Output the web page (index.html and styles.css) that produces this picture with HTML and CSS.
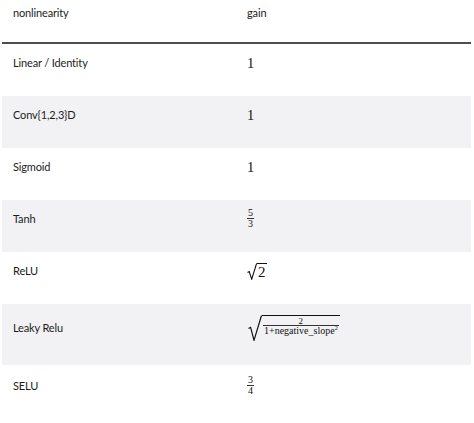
FILE: index.html
```html
<!DOCTYPE html>
<html>
<head>
<meta charset="utf-8">
<link rel="stylesheet" href="styles.css">
</head>
<body>
<table class="tbl">
  <thead>
    <tr><th class="c1"><div class="hd">nonlinearity</div></th><th><div class="hd">gain</div></th></tr>
  </thead>
  <tbody>
    <tr><td><div class="txt">Linear / Identity</div></td><td><div class="m-one">1</div></td></tr>
    <tr class="alt"><td><div class="txt">Conv{1,2,3}D</div></td><td><div class="m-one">1</div></td></tr>
    <tr><td><div class="txt">Sigmoid</div></td><td><div class="m-one">1</div></td></tr>
    <tr class="alt"><td><div class="txt">Tanh</div></td><td><div class="frac f-tanh"><span class="num">5</span><span class="den">3</span></div></td></tr>
    <tr><td><div class="txt">ReLU</div></td><td><div class="sqrt s-small"><svg class="rad" width="10" height="17" viewBox="0 0 10 17"><path d="M0.5 9.5 L2.2 8.6 L4.7 16.2 L9.6 0.5" fill="none" stroke="#111" stroke-width="1.1"/></svg><span class="rbody">2</span></div></td></tr>
    <tr class="alt tall"><td><div class="txt t-tall">Leaky Relu</div></td><td><div class="sqrt s-big"><svg class="rad" width="14" height="26" viewBox="0 0 14 26"><path d="M0.5 13.5 L2.6 12.3 L6 25.3 L13.5 0.5" fill="none" stroke="#111" stroke-width="1.2"/></svg><span class="rbody"><span class="frac f-wide"><span class="num">2</span><span class="den">1+negative_slope<sup>2</sup></span></span></span></div></td></tr>
    <tr class="last"><td><div class="txt t-last">SELU</div></td><td><div class="frac f-selu"><span class="num">3</span><span class="den">4</span></div></td></tr>
  </tbody>
</table>
</body>
</html>
```
FILE: styles.css
```css
html, body {
  margin: 0;
  padding: 0;
  background: #ffffff;
}
body {
  font-family: Lato, "Open Sans", sans-serif;
  font-size: 11px;
  letter-spacing: -0.15px;
  color: #1c1c1c;
}
.tbl {
  margin-left: 2px;
  width: 469px;
  border-collapse: collapse;
  table-layout: fixed;
}
.tbl th {
  text-align: left;
  font-weight: 400;
  padding: 0 11px;
  height: 42px;
  vertical-align: top;
  border-bottom: 2px solid #4d4d4d;
}
.tbl th.c1 {
  width: 212px;
}
.hd {
  padding-top: 6px;
  line-height: 14px;
}
.tbl td {
  padding: 0 11px;
  height: 52px;
  vertical-align: top;
}
.tbl tr.alt td {
  background: #f2f2f5;
}
.tbl tr.tall td {
  height: 61px;
}
.tbl tr.last td {
  height: 59px;
}
.txt {
  padding-top: 12px;
  line-height: 14px;
}
.txt.t-tall {
  padding-top: 17px;
}
.txt.t-last {
  padding-top: 14px;
}
.m-one {
  padding-top: 12px;
  font-family: "Liberation Serif", "DejaVu Serif", serif;
  font-size: 14.5px;
  line-height: 14px;
  letter-spacing: 0;
  color: #111;
}
.frac {
  display: flex;
  flex-direction: column;
  align-items: center;
  width: max-content;
  font-family: "Liberation Serif", "DejaVu Serif", serif;
  letter-spacing: 0;
  color: #111;
  font-size: 10px;
  line-height: 9px;
}
.frac .num {
  padding: 0 1px 1px 1px;
  border-bottom: 1px solid #333;
}
.frac .den {
  padding-top: 0;
}
.f-tanh {
  margin-top: 8px;
}
.f-selu {
  margin-top: 10px;
}
.sqrt {
  display: flex;
  align-items: flex-start;
  width: max-content;
  font-family: "Liberation Serif", "DejaVu Serif", serif;
  letter-spacing: 0;
  color: #111;
}
.sqrt .rad {
  display: block;
  flex: none;
}
.sqrt .rbody {
  border-top: 1px solid #111;
}
.s-small {
  margin-top: 11px;
}
.s-small .rbody {
  padding: 1px 1px 0 1px;
  font-size: 15px;
  line-height: 15px;
}
.s-big {
  margin-top: 11px;
  margin-left: 1px;
}
.s-big .rbody {
  padding: 2px 1px 0 1px;
}
.f-wide {
  display: flex;
}
.f-wide .num {
  align-self: stretch;
  text-align: center;
  font-size: 9px;
  line-height: 7px;
  padding: 0;
}
.f-wide .den {
  font-size: 10px;
  line-height: 10px;
  padding: 0 1px 0 1px;
}
.f-wide sup {
  font-size: 6px;
  line-height: 0;
  vertical-align: 4px;
}
```
